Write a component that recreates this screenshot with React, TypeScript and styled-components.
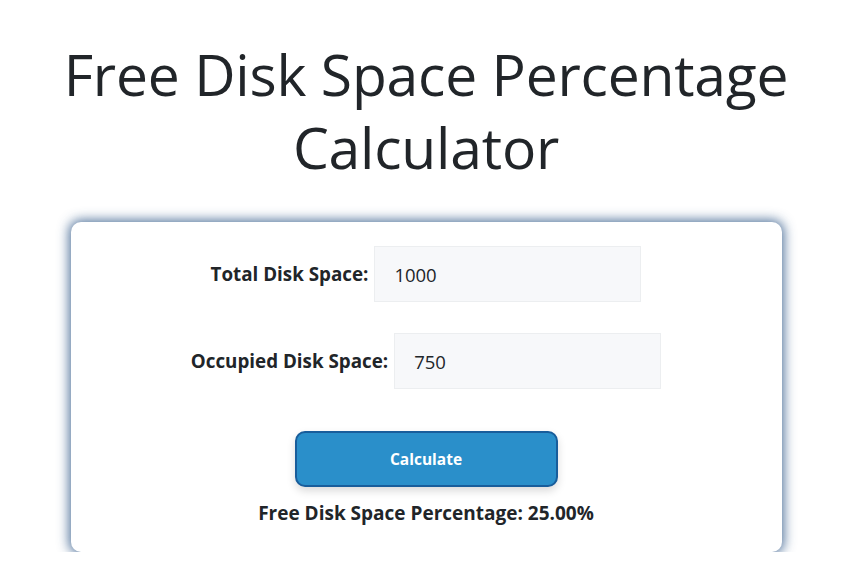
import React, { useState } from 'react';
import styled, { createGlobalStyle } from 'styled-components';

const GlobalStyle = createGlobalStyle`
  body {
    margin: 0;
    background: #fff;
    font-family: "Open Sans", "Noto Sans", sans-serif;
    color: #212529;
  }
`;

const Page = styled.div`
  width: 852px;
  display: flex;
  flex-direction: column;
  align-items: center;
  padding-top: 38px;
`;

const Title = styled.h1`
  margin: 0 0 38px;
  font-size: 57px;
  font-weight: 400;
  line-height: 73px;
  text-align: center;
  width: 760px;
  letter-spacing: -0.2px;
`;

const Card = styled.div`
  width: 711px;
  box-sizing: border-box;
  background: #fff;
  border-radius: 10px;
  box-shadow: 0 0 12px 2px rgba(50, 90, 138, 0.85);
  padding: 24px 0 26px;
  display: flex;
  flex-direction: column;
  align-items: center;
`;

const Row = styled.div<{ $gap?: number }>`
  display: flex;
  align-items: center;
  margin-bottom: ${p => p.$gap ?? 31}px;
`;

const Label = styled.label`
  font-size: 18.8px;
  font-weight: 700;
  margin-right: 6px;
`;

const Input = styled.input`
  width: 267px;
  height: 56px;
  box-sizing: border-box;
  border: 1px solid #eceef0;
  background: #f7f8fa;
  padding: 0 19px;
  font-family: inherit;
  font-size: 18.5px;
  color: #212529;
  outline: none;
`;

const Button = styled.button`
  width: 263px;
  height: 56px;
  border-radius: 10px;
  border: 2px solid #185d9b;
  background: #2a8fca;
  color: #fff;
  font-family: inherit;
  font-size: 15.5px;
  font-weight: 700;
  box-shadow: 0 4px 8px rgba(0, 0, 0, 0.15);
  cursor: pointer;
  margin-top: 42px;
`;

const Result = styled.p`
  margin: 13px 0 0;
  font-size: 19px;
  line-height: 26px;
  font-weight: 700;
`;

export default function App() {
  const [total, setTotal] = useState('1000');
  const [used, setUsed] = useState('750');
  const [result, setResult] = useState('25.00');

  function calculate(): void {
    const t = parseFloat(total);
    const u = parseFloat(used);
    if (!t) return;
    setResult((((t - u) / t) * 100).toFixed(2));
  }

  return (
    <>
      <GlobalStyle />
      <Page>
        <Title>Free Disk Space Percentage Calculator</Title>
        <Card>
          <Row>
            <Label htmlFor="total">Total Disk Space:</Label>
            <Input id="total" value={total} onChange={e => setTotal(e.target.value)} />
          </Row>
          <Row $gap={0}>
            <Label htmlFor="used">Occupied Disk Space:</Label>
            <Input id="used" value={used} onChange={e => setUsed(e.target.value)} />
          </Row>
          <Button onClick={calculate}>Calculate</Button>
          <Result>Free Disk Space Percentage: {result}%</Result>
        </Card>
      </Page>
    </>
  );
}
